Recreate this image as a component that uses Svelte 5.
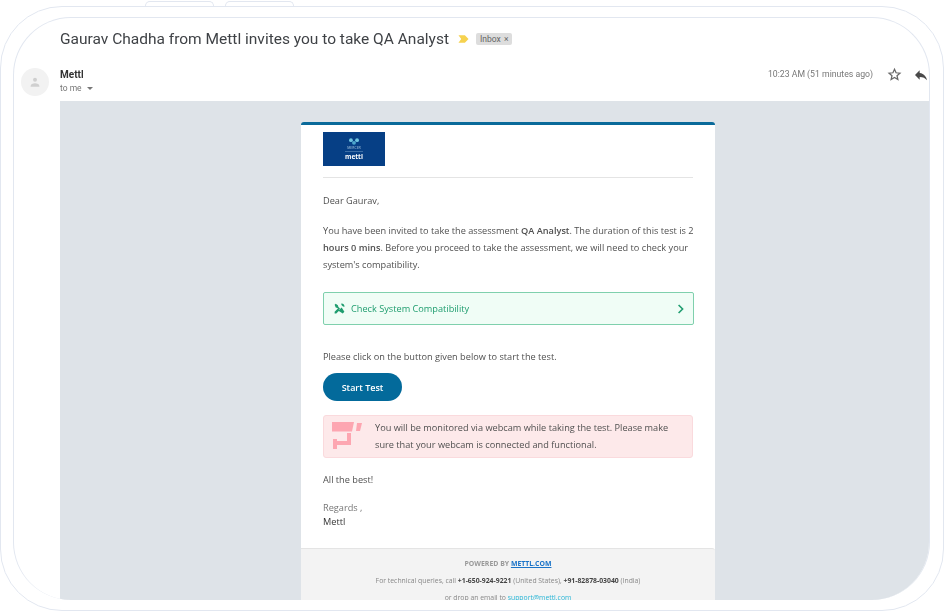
<script>
	const tabs = [0, 1];
</script>

<div class="screen">
	<div class="tabs">
		{#each tabs as tab}
			<span class="tab" data-tab={tab}></span>
		{/each}
	</div>
	<div class="outer">
		<div class="inner">
			<header class="subject">
				<h1>Gaurav Chadha from Mettl invites you to take QA Analyst</h1>
				<svg class="marker" viewBox="0 0 12 10" width="11" height="10" aria-hidden="true">
					<path d="M0.5 1H7.500L11.500 5L7.500 9H0.500L3.500 5Z" fill="#f6d24f" />
				</svg>
				<span class="label">Inbox <i>×</i></span>
			</header>

			<div class="sender">
				<div class="avatar">
					<svg viewBox="0 0 24 24" width="14" height="14" aria-hidden="true">
						<circle cx="12" cy="8" r="3.400" fill="#cfcfcf" />
						<path d="M4.500 19c0-3.400 3.600-5 7.500-5s7.500 1.600 7.500 5v1h-15z" fill="#cfcfcf" />
					</svg>
				</div>
				<div class="who">
					<strong>Mettl</strong>
					<span>to me <b class="caret"></b></span>
				</div>
				<div class="meta">
					<span class="time">10:23 AM (51 minutes ago)</span>
					<svg viewBox="0 0 24 24" width="15" height="15" aria-hidden="true">
						<path d="M12 3.500l2.500 5.700 6.200.6-4.700 4.100 1.400 6.100-5.400-3.200-5.400 3.200 1.400-6.100-4.700-4.100 6.200-.6z" fill="none" stroke="#666" stroke-width="2" />
					</svg>
					<svg class="reply" viewBox="0 0 24 24" width="16" height="16" aria-hidden="true">
						<path d="M10 9V5l-7 7 7 7v-4.100c5 0 8.500 1.600 11 5.100-1-5-4-10-11-11z" fill="#4a4a4a" />
					</svg>
				</div>
			</div>

			<div class="panel">
				<article class="card">
					<div class="content">
						<div class="logo">
							<svg viewBox="0 0 16 8" width="14" height="7" aria-hidden="true">
								<circle cx="4.500" cy="2.500" r="2.200" fill="#6fc4e0" />
								<circle cx="11.500" cy="2.500" r="2.200" fill="#6fc4e0" />
								<circle cx="8" cy="5.500" r="2.200" fill="#4da6cc" />
							</svg>
							<span class="logo-small">MERCER</span>
							<span class="logo-rule"></span>
							<span class="logo-name">mettl</span>
						</div>
						<hr />
						<p class="greeting">Dear Gaurav,</p>
						<p class="intro">
							You have been invited to take the assessment <strong>QA Analyst</strong>. The duration of this test is 2
							<strong>hours 0 mins</strong>. Before you proceed to take the assessment, we will need to check your system's
							compatibility.
						</p>

						<div class="check">
							<svg viewBox="0 0 24 24" width="13" height="13" aria-hidden="true">
								<path d="M3 5l2-2 4 3 1 3 3 3-2 2-3-3-3-1z M15 3a5 5 0 0 1 6 6l-3-1-2-2-1-3z M16 10l5 8-3 3-8-5 2-2 3-3z M3 18l6-6 3 3-6 6-3 0z" fill="#1f9d6f" />
							</svg>
							<span>Check System Compatibility</span>
							<svg class="chevron" viewBox="0 0 10 12" width="8" height="10" aria-hidden="true">
								<path d="M2 1l5 5-5 5" fill="none" stroke="#1f9d6f" stroke-width="2" />
							</svg>
						</div>

						<p class="prompt">Please click on the button given below to start the test.</p>
						<button type="button" class="start">Start Test</button>

						<div class="warning">
							<svg viewBox="0 0 30 30" width="30" height="30" aria-hidden="true">
								<path d="M0 1h22l-2 9.500H0z M25 2h5l-2 8h-4z M15 12h4v12H5v4H1v-10h4v2h10z" fill="#fda6b1" />
							</svg>
							<p>You will be monitored via webcam while taking the test. Please make sure that your webcam is connected and functional.</p>
						</div>

						<p class="best">All the best!</p>
						<p class="regards">Regards ,</p>
						<p class="signoff">Mettl</p>
					</div>

					<footer>
						<p class="powered">POWERED BY <a href="#top">METTL.COM</a></p>
						<p>For technical queries, call <strong>+1-650-924-9221</strong> (United States), <strong>+91-82878-03040</strong> (India)</p>
						<p>or drop an email to <a class="mail" href="#top">support@mettl.com</a></p>
					</footer>
				</article>
			</div>
		</div>
	</div>
</div>

<style>
	:global(body) {
		margin: 0;
		background: #fff;
	}

	.screen {
		width: 944px;
		height: 611px;
		overflow: hidden;
		font-family: "Open Sans", "Liberation Sans", sans-serif;
		color: #505050;
		filter: blur(0.5px);
		box-sizing: border-box;
	}

	.tabs {
		display: flex;
		gap: 11px;
		height: 6px;
		padding: 1px 0 0 145px;
		box-sizing: border-box;
	}

	.tab {
		width: 67px;
		border: 1px solid #e2e7f0;
		border-bottom: 0;
		border-radius: 6px 6px 0 0;
	}

	.outer {
		height: 605px;
		padding: 10px 13px 10px 12px;
		box-sizing: border-box;
		border: 1px solid #e2e7f0;
		border-radius: 62px;
	}

	.inner {
		height: 100%;
		border: 1px solid #e2e7f0;
		border-bottom: 0;
		border-radius: 58px;
		overflow: hidden;
		box-sizing: border-box;
		display: flex;
		flex-direction: column;
	}

	.subject {
		display: flex;
		align-items: center;
		height: 42px;
		padding: 0 0 0 46px;
		box-sizing: border-box;
	}

	h1 {
		margin: 0 9px 0 0;
		font: 400 15.500px "Roboto", "Liberation Sans", sans-serif;
		color: #3f4246;
		white-space: nowrap;
	}

	.label {
		margin-left: 7px;
		padding: 1px 4px;
		border-radius: 2px;
		background: #dddddd;
		color: #666;
		font: 8.500px "Roboto", sans-serif;
	}

	.label i {
		font-style: normal;
		margin-left: 1px;
	}

	.sender {
		display: flex;
		height: 41px;
		box-sizing: border-box;
		padding: 8px 0 0 7px;
	}

	.avatar {
		width: 28px;
		height: 28px;
		border-radius: 50%;
		background: #f2f2f2;
		display: flex;
		align-items: center;
		justify-content: center;
	}

	.who {
		margin-left: 11px;
		padding-top: 1px;
		display: flex;
		flex-direction: column;
		gap: 3px;
		font-family: "Roboto", sans-serif;
	}

	.who strong {
		font-size: 10px;
		color: #333;
	}

	.who span {
		font-size: 8.500px;
		color: #777;
	}

	.caret {
		display: inline-block;
		margin: 0 0 1px 3px;
		border: 3px solid transparent;
		border-top-color: #777;
		border-bottom: 0;
	}

	.meta {
		margin: -1px 0 0 auto;
		display: flex;
		align-items: flex-start;
		gap: 11.500px;
		font: 8.700px "Roboto", sans-serif;
		color: #777;
	}

	.time {
		line-height: 14px;
		margin-right: 2px;
	}

	.panel {
		flex: 1;
		min-height: 0;
		margin-left: 46px;
		background: #dee3e8;
		padding: 21px 0 0 241px;
		overflow: hidden;
	}

	.card {
		width: 414px;
		background: #fff;
		border-top: 3px solid #0a6a9a;
		border-radius: 3px 3px 0 0;
		font-size: 9.200px;
	}

	.content {
		padding: 7px 21px 0 22px;
		height: 423px;
		box-sizing: border-box;
	}

	.logo {
		width: 62px;
		height: 34px;
		background: #063f85;
		display: flex;
		flex-direction: column;
		align-items: center;
		justify-content: center;
		color: #fff;
		gap: 1px;
	}

	.logo-small {
		font-size: 3.500px;
		line-height: 4px;
		color: #a8c7df;
	}

	.logo-rule {
		width: 18px;
		height: 1px;
		background: #3d6ea5;
	}

	.logo-name {
		font-size: 6.500px;
		line-height: 7px;
		font-weight: 700;
	}

	hr {
		margin: 11px 1px 0 0;
		border: 0;
		border-top: 1px solid #e4e4e4;
	}

	p {
		margin: 0;
	}

	.greeting {
		margin-top: 16px;
		line-height: 13px;
	}

	.intro {
		margin-top: 15px;
		line-height: 17px;
	}

	.intro strong {
		font-weight: 600;
	}

	.check {
		margin-top: 19px;
		height: 33px;
		box-sizing: border-box;
		border: 1px solid #7fd0ad;
		border-radius: 2px;
		background: #f0fdf6;
		display: flex;
		align-items: center;
		gap: 5px;
		padding: 0 8px 0 9px;
		color: #1f9d6f;
	}

	.chevron {
		margin-left: auto;
	}

	.prompt {
		margin-top: 25px;
		line-height: 13px;
	}

	.start {
		display: block;
		margin-top: 10px;
		width: 79px;
		height: 28px;
		border: 0;
		border-radius: 14px;
		background: #036a9b;
		color: #fff;
		font: 600 9px "Open Sans", sans-serif;
	}

	.warning {
		margin: 14px 1px 0 0;
		height: 43px;
		box-sizing: border-box;
		border: 1px solid #fadadd;
		border-radius: 3px;
		background: #fde9ea;
		display: flex;
		align-items: center;
		gap: 13px;
		padding: 0 8px 2px;
		line-height: 17px;
	}

	.warning svg {
		flex: none;
	}

	.best {
		margin-top: 15px;
		line-height: 13px;
	}

	.regards {
		margin-top: 15px;
		line-height: 13px;
		color: #777;
	}

	.signoff {
		line-height: 15px;
		color: #333;
	}

	footer {
		background: #f3f3f3;
		border-top: 1px solid #e4e4e4;
		border-radius: 0 3px 0 0;
		padding-top: 6px;
		text-align: center;
		font-size: 6.850px;
		line-height: 17px;
		color: #888;
	}

	footer strong {
		color: #444;
		font-weight: 700;
	}

	footer a {
		color: #1a73c8;
		font-weight: 700;
	}

	footer a.mail {
		color: #2bb6d6;
		font-weight: 400;
	}

	.powered {
		font-weight: 700;
		color: #999;
		font-size: 6.900px;
	}
</style>
